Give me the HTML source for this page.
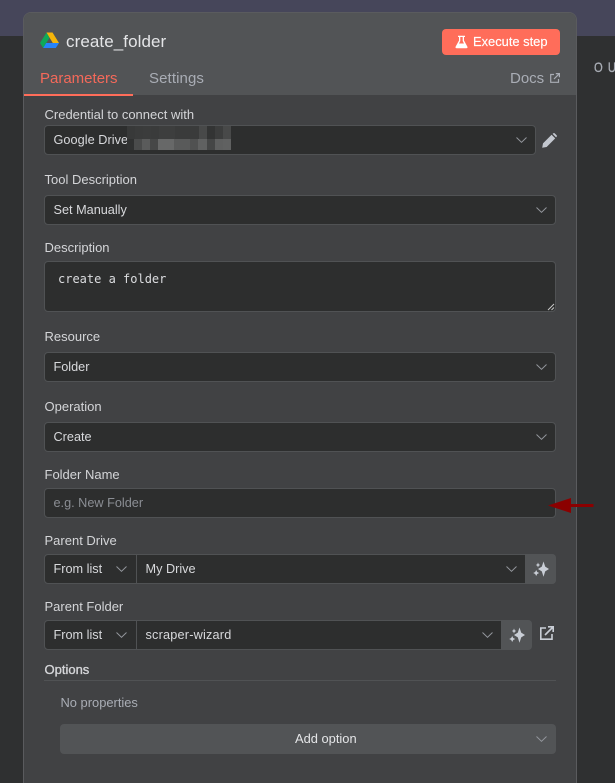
<!DOCTYPE html>
<html><head><meta charset="utf-8"><style>
*{box-sizing:border-box}
html,body{margin:0;padding:0;width:615px;height:783px;overflow:hidden;background:#2f3031;font-family:"Liberation Sans",sans-serif}
#w{position:absolute;left:0;top:0;width:615px;height:783px;overflow:hidden}
.a{position:absolute}
.t{position:absolute;white-space:nowrap;line-height:16px}
.l{font-size:13px;color:#d4d5d8;margin-left:.5px}
.v{font-size:12.7px;color:#d8d9dc;margin-left:.5px}
.box{position:absolute;background:#2d2e2e;border:1px solid #505254;border-radius:4px}
svg{position:absolute;overflow:visible}
</style></head><body><div id="w">
<div class="a" style="left:0;top:0;width:615px;height:36px;background:#46465a"></div>
<div class="t" style="left:594px;top:59px;font-size:14px;color:#a9adb5;letter-spacing:6.5px;-webkit-text-stroke:.3px #a9adb5;transform:scaleX(.8);transform-origin:left center">OU</div>
<div class="a" style="left:23px;top:12px;width:554px;height:780px;background:#414244;border:1px solid #5a5b5e;border-radius:8px 8px 0 0;overflow:hidden">
<div class="a" style="left:0;top:0;width:554px;height:82px;background:#525456"></div>
<div class="a" style="left:0;top:81px;width:109px;height:2px;background:#ff6d5a"></div>
</div>
<svg style="left:40px;top:32px" width="19" height="17" viewBox="0 0 19 17">
<path d="M6.5 .5L9.5 5.7L3.2 16L0 11Z" fill="#0fa958"/>
<path d="M6.5 .5H12.5L19 11H12.8Z" fill="#f5b50a"/>
<path d="M6.2 11H19L15.8 16H3.2Z" fill="#2684fc"/>
</svg>
<div class="t" style="left:66px;top:34px;font-size:17px;color:#e4e5e7;letter-spacing:.08px">create_folder</div>
<div class="a" style="left:442px;top:29px;width:118px;height:26px;background:#ff6d5a;border-radius:4px"></div>
<svg style="left:455px;top:35px" width="13" height="14" viewBox="0 0 13 14"><path d="M3 .7H10V2H9V5.5L12.3 11.5Q13 13.3 11.3 13.3H1.7Q0 13.3 .7 11.5L4 5.5V2H3ZM5.3 2V6L4 8.5H9L7.7 6V2Z" fill="#fff"/></svg>
<div class="t" style="left:473px;top:34px;font-size:12.9px;color:#fff;-webkit-text-stroke:.15px #fff">Execute step</div>
<div class="t" style="left:40px;top:71px;font-size:15px;color:#f4695a">Parameters</div>
<div class="t" style="left:149px;top:71px;font-size:15px;color:#a9adb5;letter-spacing:.1px">Settings</div>
<div class="t" style="left:510px;top:71px;font-size:15px;color:#a9adb5">Docs</div>
<svg style="left:550px;top:73px" width="10" height="10" viewBox="0 0 10 10" fill="none" stroke="#a9adb5" stroke-width="1.2"><path d="M4 1.5H.7V9.3H8.5V6M4 6L9.3.7M5.8.6H9.4V4.2"/></svg>

<div class="t l" style="left:44px;top:107px">Credential to connect with</div>
<div class="box" style="left:44px;top:125px;width:492px;height:30px"></div>
<div class="t v" style="left:53px;top:132px;letter-spacing:.05px">Google Drive</div>
<svg style="left:127px;top:126px" width="105" height="24" viewBox="0 0 105 24">
<rect x="0" y="0" width="8" height="13" fill="#383939"/><rect x="8" y="0" width="8" height="13" fill="#3a3b3b"/><rect x="16" y="0" width="8" height="13" fill="#3b3c3c"/><rect x="24" y="0" width="8" height="13" fill="#3a3b3b"/><rect x="32" y="0" width="16" height="13" fill="#3d3e3e"/><rect x="48" y="0" width="24" height="13" fill="#3a3b3b"/><rect x="72" y="0" width="8" height="13" fill="#484949"/><rect x="80" y="0" width="8" height="13" fill="#333434"/><rect x="88" y="0" width="8" height="13" fill="#3c3d3d"/><rect x="96" y="0" width="8" height="13" fill="#484949"/>
<rect x="0" y="13" width="7" height="11" fill="#303131"/><rect x="7" y="13" width="8" height="11" fill="#4a4b4b"/><rect x="15" y="13" width="8" height="11" fill="#5a5b5b"/><rect x="23" y="13" width="8" height="11" fill="#464747"/><rect x="31" y="13" width="16" height="11" fill="#676868"/><rect x="47" y="13" width="16" height="11" fill="#595a5a"/><rect x="63" y="13" width="8" height="11" fill="#505151"/><rect x="71" y="13" width="9" height="11" fill="#606161"/><rect x="80" y="13" width="8" height="11" fill="#454646"/><rect x="88" y="13" width="8" height="11" fill="#5e5f5f"/><rect x="96" y="13" width="8" height="11" fill="#606161"/>
</svg>
<svg style="left:516px;top:137px" width="11" height="6" viewBox="0 0 11 6" fill="none" stroke="#93969c"><path d="M.5.5L5.5 5.3L10.5.5"/></svg>
<svg style="left:542px;top:133px" width="15" height="15" viewBox="0 0 15 15"><path d="M.2 14.8L1 10.4L9.6 1.8L13.2 5.4L4.6 14ZM10.6.9L11.4.2Q12 -.2 12.6.3L14.7 2.4Q15.2 3 14.7 3.6L14.1 4.4Z" fill="#c3c7cf"/></svg>

<div class="t l" style="left:44px;top:172px">Tool Description</div>
<div class="box" style="left:44px;top:195px;width:512px;height:30px"></div>
<div class="t v" style="left:53px;top:202px">Set Manually</div>
<svg style="left:536px;top:207px" width="11" height="6" viewBox="0 0 11 6" fill="none" stroke="#93969c"><path d="M.5.5L5.5 5.3L10.5.5"/></svg>

<div class="t l" style="left:44px;top:240px">Description</div>
<div class="box" style="left:44px;top:261px;width:512px;height:51px"></div>
<div class="t" style="left:58px;top:271px;font-family:'DejaVu Sans Mono','Liberation Mono',monospace;font-size:12px;color:#dcdde0">create a folder</div>
<svg style="left:547px;top:303px" width="8" height="8" viewBox="0 0 8 8" stroke="#c9c9c9" fill="none"><path d="M1 7L7 1M4.5 7L7 4.5"/></svg>

<div class="t l" style="left:44px;top:329px">Resource</div>
<div class="box" style="left:44px;top:352px;width:512px;height:30px"></div>
<div class="t v" style="left:53px;top:359px">Folder</div>
<svg style="left:536px;top:364px" width="11" height="6" viewBox="0 0 11 6" fill="none" stroke="#93969c"><path d="M.5.5L5.5 5.3L10.5.5"/></svg>

<div class="t l" style="left:44px;top:399px">Operation</div>
<div class="box" style="left:44px;top:422px;width:512px;height:30px"></div>
<div class="t v" style="left:53px;top:429px">Create</div>
<svg style="left:536px;top:434px" width="11" height="6" viewBox="0 0 11 6" fill="none" stroke="#93969c"><path d="M.5.5L5.5 5.3L10.5.5"/></svg>

<div class="t l" style="left:44px;top:467px">Folder Name</div>
<div class="box" style="left:44px;top:488px;width:512px;height:30px"></div>
<div class="t v" style="left:53px;top:495px;color:#8b8e94">e.g. New Folder</div>
<svg style="left:548px;top:497px" width="46" height="17" viewBox="0 0 46 17"><path d="M0 8.5L23 1V7H45.5V10H23V16Z" fill="#8b0000"/></svg>

<div class="t l" style="left:44px;top:533px">Parent Drive</div>
<div class="a" style="left:44px;top:554px;width:512px;height:30px;background:#2d2e2e;border:1px solid #505254;border-radius:4px"></div>
<div class="a" style="left:136px;top:554px;width:1px;height:30px;background:#505254"></div>
<div class="a" style="left:525px;top:554px;width:31px;height:30px;background:#525456;border-radius:0 4px 4px 0"></div>
<div class="t v" style="left:53px;top:561px">From list</div>
<svg style="left:116px;top:566px" width="11" height="6" viewBox="0 0 11 6" fill="none" stroke="#93969c"><path d="M.5.5L5.5 5.3L10.5.5"/></svg>
<div class="t v" style="left:145px;top:561px">My Drive</div>
<svg style="left:506px;top:566px" width="11" height="6" viewBox="0 0 11 6" fill="none" stroke="#93969c"><path d="M.5.5L5.5 5.3L10.5.5"/></svg>
<svg style="left:533px;top:561px" width="16" height="16" viewBox="0 0 16 16" fill="#c9ced6"><path d="M10.5 .5L12.2 5.6L16 8L12.2 10.4L10.5 15.8L8.8 10.4L5 8L8.8 5.6Z"/><path d="M3.2 9L4.2 11L6.2 12L4.2 13L3.2 15L2.2 13L.2 12L2.2 11Z"/><path d="M5 1.5L5.7 3.3L7.2 4L5.7 4.7L5 6.5L4.3 4.7L2.8 4L4.3 3.3Z"/></svg>

<div class="t l" style="left:44px;top:599px">Parent Folder</div>
<div class="a" style="left:44px;top:620px;width:488px;height:30px;background:#2d2e2e;border:1px solid #505254;border-radius:4px"></div>
<div class="a" style="left:136px;top:620px;width:1px;height:30px;background:#505254"></div>
<div class="a" style="left:501px;top:620px;width:31px;height:30px;background:#525456;border-radius:0 4px 4px 0"></div>
<div class="t v" style="left:53px;top:627px">From list</div>
<svg style="left:116px;top:632px" width="11" height="6" viewBox="0 0 11 6" fill="none" stroke="#93969c"><path d="M.5.5L5.5 5.3L10.5.5"/></svg>
<div class="t v" style="left:145px;top:627px;letter-spacing:.2px">scraper-wizard</div>
<svg style="left:482px;top:632px" width="11" height="6" viewBox="0 0 11 6" fill="none" stroke="#93969c"><path d="M.5.5L5.5 5.3L10.5.5"/></svg>
<svg style="left:509px;top:627px" width="16" height="16" viewBox="0 0 16 16" fill="#c9ced6"><path d="M10.5 .5L12.2 5.6L16 8L12.2 10.4L10.5 15.8L8.8 10.4L5 8L8.8 5.6Z"/><path d="M3.2 9L4.2 11L6.2 12L4.2 13L3.2 15L2.2 13L.2 12L2.2 11Z"/><path d="M5 1.5L5.7 3.3L7.2 4L5.7 4.7L5 6.5L4.3 4.7L2.8 4L4.3 3.3Z"/></svg>
<svg style="left:540px;top:626px" width="14" height="14" viewBox="0 0 14 14" fill="none" stroke="#c9ced6" stroke-width="1.6"><path d="M6 2H.8V13.2H12V8M5 9L13 1M8 .8H13.2V6"/></svg>

<div class="t" style="left:44.5px;top:662px;font-size:13px;color:#d4d5d8;-webkit-text-stroke:.35px #d4d5d8">Options</div>
<div class="a" style="left:44px;top:680px;width:512px;height:1px;background:#505254"></div>
<div class="t" style="left:60.5px;top:695px;font-size:12.9px;color:#a9adb5">No properties</div>
<div class="a" style="left:60px;top:724px;width:496px;height:30px;background:#525456;border-radius:4px"></div>
<div class="t" style="left:295px;top:731px;font-size:12.9px;color:#e4e5e7">Add option</div>
<svg style="left:536px;top:736px" width="11" height="6" viewBox="0 0 11 6" fill="none" stroke="#93969c"><path d="M.5.5L5.5 5.3L10.5.5"/></svg>
</div></body></html>
